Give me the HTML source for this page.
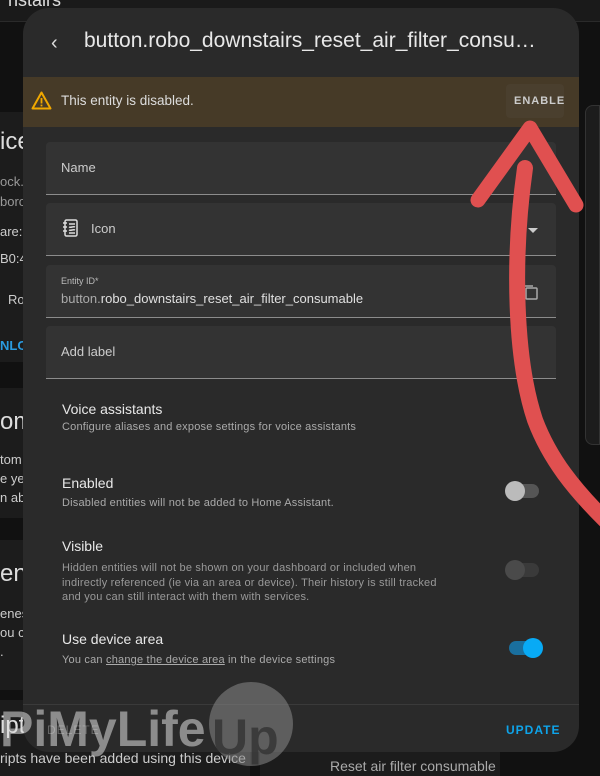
<!DOCTYPE html>
<html><head><meta charset="utf-8"><style>
*{box-sizing:border-box;margin:0;padding:0}
body{width:600px;height:776px;overflow:hidden;background:#111;font-family:"Liberation Sans",sans-serif;color:#e1e1e1;position:relative}
.abs{position:absolute}
.card{position:absolute;background:#1c1c1c}
.dlg{position:absolute;left:23px;top:8px;width:556px;height:744px;background:#2a2a2a;border-radius:26px;overflow:hidden}
.field{position:absolute;left:23px;width:510px;background:#333;border-radius:4px 4px 0 0;border-bottom:1px solid #8c8c8c}
.t{position:absolute;white-space:nowrap}
.sw{position:absolute;width:30px;height:14px;border-radius:7px}
.knob{position:absolute;width:20px;height:20px;border-radius:50%;top:-3px}
</style></head><body>
<div class="abs" style="left:0;top:0;width:600px;height:22px;background:#1a1a1a;border-bottom:1px solid #2a2a2a"></div>
<div class="t" style="left:8px;top:-10px;font-size:18px;color:#ddd">nstairs</div>
<div class="card" style="left:0;top:112px;width:30px;height:250px"></div>
<div class="t" style="left:0;top:128px;font-size:24px;color:#ddd">ice</div>
<div class="t" style="left:0;top:172px;font-size:13px;color:#999;line-height:20px">ock.v<br>boro</div>
<div class="t" style="left:0;top:218px;font-size:13px;color:#ccc;line-height:27px">are:<br>B0:4</div>
<div class="t" style="left:8px;top:292px;font-size:13px;color:#ccc">Ro</div>
<div class="t" style="left:0;top:338px;font-size:13px;color:#2a9be0;font-weight:bold">NLO</div>
<div class="card" style="left:0;top:388px;width:30px;height:130px"></div>
<div class="t" style="left:0;top:408px;font-size:24px;color:#ddd">om</div>
<div class="t" style="left:0;top:450px;font-size:13px;color:#ccc;line-height:19px">tom<br>e yet<br>n abo</div>
<div class="card" style="left:0;top:540px;width:30px;height:150px"></div>
<div class="t" style="left:0;top:560px;font-size:24px;color:#ddd">ene</div>
<div class="t" style="left:0;top:604px;font-size:13px;color:#ccc;line-height:19px">enes<br>ou ca<br>.</div>
<div class="card" style="left:0;top:700px;width:250px;height:76px"></div>
<div class="t" style="left:0;top:712px;font-size:24px;color:#ddd">ipt</div>
<div class="t" style="left:0;top:750px;font-size:14px;color:#ccc">ripts have been added using this device</div>
<div class="card" style="left:585px;top:105px;width:15px;height:340px;border:1px solid #333;border-radius:8px 0 0 8px"></div>
<div class="card" style="left:260px;top:735px;width:240px;height:41px"></div>
<div class="t" style="left:330px;top:758px;font-size:14px;color:#aaa">Reset air filter consumable</div>

<div class="dlg">
  <div class="t" style="left:28px;top:24px;font-size:20px;color:#ddd">&#8249;</div>
  <div class="t" style="left:61px;top:21px;font-size:21px;color:#e8e8e8;width:466px;overflow:hidden;text-overflow:ellipsis">button.robo_downstairs_reset_air_filter_consumable</div>
  <div class="abs" style="left:0;top:69px;width:556px;height:50px;background:#463a27"></div>
  <svg class="abs" style="left:8px;top:83px" width="21" height="19" viewBox="0 0 21 19"><path d="M10.5 1.5 L19.5 17.5 L1.5 17.5 Z" fill="none" stroke="#f0a800" stroke-width="2" stroke-linejoin="round"/><rect x="9.6" y="7" width="1.8" height="5.5" fill="#f0a800"/><rect x="9.6" y="13.6" width="1.8" height="1.8" fill="#f0a800"/></svg>
  <div class="t" style="left:38px;top:85px;font-size:13.5px;color:#ddd">This entity is disabled.</div>
  <div class="abs" style="left:483px;top:76px;width:58px;height:34px;background:#4a3f2e;border-radius:4px"></div>
  <div class="t" style="left:491px;top:87px;font-size:11px;font-weight:bold;color:#ccc;letter-spacing:1px">ENABLE</div>

  <div class="field" style="top:134px;height:53px"><div class="t" style="left:15px;top:18px;font-size:13px;color:#ccc">Name</div></div>
  <div class="field" style="top:195px;height:53px">
    <svg class="abs" style="left:15px;top:15px" width="20" height="20" viewBox="0 0 20 20" fill="none" stroke="#ddd" stroke-width="1.5"><rect x="4" y="2" width="12" height="16" rx="1.5"/><path d="M2 5h4M2 9h4M2 13h4M8 6h6M8 9c2 1 4-1 6 0M8 12c2 1 4-1 6 0M8 15h6"/></svg>
    <div class="t" style="left:45px;top:18px;font-size:13px;color:#ccc">Icon</div>
    <div class="abs" style="left:482px;top:25px;border-left:5px solid transparent;border-right:5px solid transparent;border-top:5px solid #ccc"></div>
  </div>
  <div class="field" style="top:257px;height:53px">
    <div class="t" style="left:15px;top:11px;font-size:9px;color:#bbb">Entity ID*</div>
    <div class="t" style="left:15px;top:26px;font-size:13px;color:#e0e0e0"><span style="color:#aaa">button.</span>robo_downstairs_reset_air_filter_consumable</div>
    <svg class="abs" style="left:476px;top:18px" width="18" height="18" viewBox="0 0 18 18" fill="none" stroke="#aaa" stroke-width="1.5"><rect x="4" y="5" width="11" height="11" rx="1"/><path d="M2 12V3h9"/></svg>
  </div>
  <div class="field" style="top:318px;height:53px"><div class="t" style="left:15px;top:18px;font-size:13px;color:#ccc">Add label</div></div>

  <div class="t" style="left:39px;top:393px;font-size:14px;color:#e8e8e8">Voice assistants</div>
  <div class="t" style="left:39px;top:413px;font-size:11px;color:#aaa;letter-spacing:0.2px">Configure aliases and expose settings for voice assistants</div>
  <div class="t" style="left:505px;top:398px;font-size:16px;color:#aaa">&#8250;</div>

  <div class="t" style="left:39px;top:467px;font-size:14px;color:#e8e8e8">Enabled</div>
  <div class="t" style="left:39px;top:489px;font-size:11px;color:#aaa;letter-spacing:0.2px">Disabled entities will not be added to Home Assistant.</div>
  <div class="sw" style="left:486px;top:476px;background:#555"><div class="knob" style="left:-4px;background:#bbb"></div></div>

  <div class="t" style="left:39px;top:530px;font-size:14px;color:#e8e8e8">Visible</div>
  <div class="t" style="left:39px;top:553px;font-size:11px;color:#999;line-height:14.5px;letter-spacing:0.2px">Hidden entities will not be shown on your dashboard or included when<br>indirectly referenced (ie via an area or device). Their history is still tracked<br>and you can still interact with them with services.</div>
  <div class="sw" style="left:486px;top:555px;background:#3a3a3a"><div class="knob" style="left:-4px;background:#4a4a4a"></div></div>

  <div class="t" style="left:39px;top:623px;font-size:14px;color:#e8e8e8">Use device area</div>
  <div class="t" style="left:39px;top:646px;font-size:11px;color:#aaa;letter-spacing:0.2px">You can <span style="text-decoration:underline">change the device area</span> in the device settings</div>
  <div class="sw" style="left:486px;top:633px;background:#1a6f9e"><div class="knob" style="left:14px;background:#08aaf5"></div></div>

  <div class="abs" style="left:0;top:696px;width:556px;height:1px;background:#3a3a3a"></div>
  <div class="t" style="left:24px;top:715px;font-size:12px;color:#666;letter-spacing:1px">DELETE</div>
  <div class="t" style="left:483px;top:715px;font-size:12px;font-weight:bold;color:#0ea4ea;letter-spacing:1px">UPDATE</div>
</div>

<svg class="abs" style="left:0;top:680px" width="320" height="96" viewBox="0 680 320 96">
<circle cx="251" cy="724" r="42" fill="#888" opacity="0.55"/>
<text x="0" y="746" font-family="Liberation Sans,sans-serif" font-size="50" font-weight="bold" fill="#ddd" opacity="0.55">PiMyLife</text>
<text x="212" y="754" font-family="Liberation Sans,sans-serif" font-size="50" font-weight="bold" fill="#333" opacity="0.8">Up</text>
</svg>

<svg class="abs" style="left:0;top:0" width="600" height="776" viewBox="0 0 600 776" fill="none" stroke="#e05050" stroke-linecap="round" stroke-linejoin="round">
<path d="M478 200 L530 128 L576 205" stroke-width="15"/>
<path d="M525 168 C512 260 515 360 535 420 C550 460 575 490 605 520" stroke-width="16"/>
</svg>
</body></html>
